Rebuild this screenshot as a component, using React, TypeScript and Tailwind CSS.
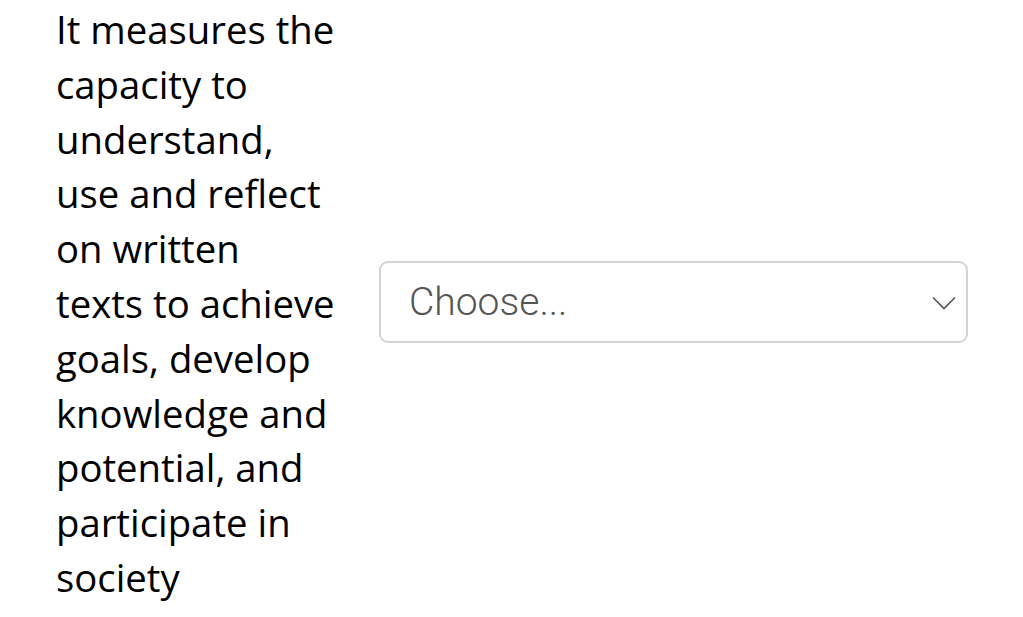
export default function App() {
  return (
    <div className="min-h-[617px] bg-white">
      <div className="flex items-center pl-[56px]">
        <p className="w-[279px] shrink-0 pt-[2px] text-[38.3px] leading-[54.8px] text-black font-['Open_Sans',sans-serif]">
          It measures the capacity to understand, use and reflect on written texts to achieve goals, develop knowledge and potential, and participate in society
        </p>
        <div className="ml-[44px] flex h-[82px] w-[589px] items-center justify-between rounded-[9px] border-2 border-[#d4d4d4] pl-[28px] pr-[10px]">
          <span className="font-['Roboto',sans-serif] text-[39px] font-light text-[#555]">Choose...</span>
          <svg width="24" height="14" viewBox="0 0 24 14" fill="none" stroke="#555" strokeWidth="1.6" className="mt-[1px]">
            <path d="M1 1.5 L12 12.5 L23 1.5" />
          </svg>
        </div>
      </div>
    </div>
  );
}
